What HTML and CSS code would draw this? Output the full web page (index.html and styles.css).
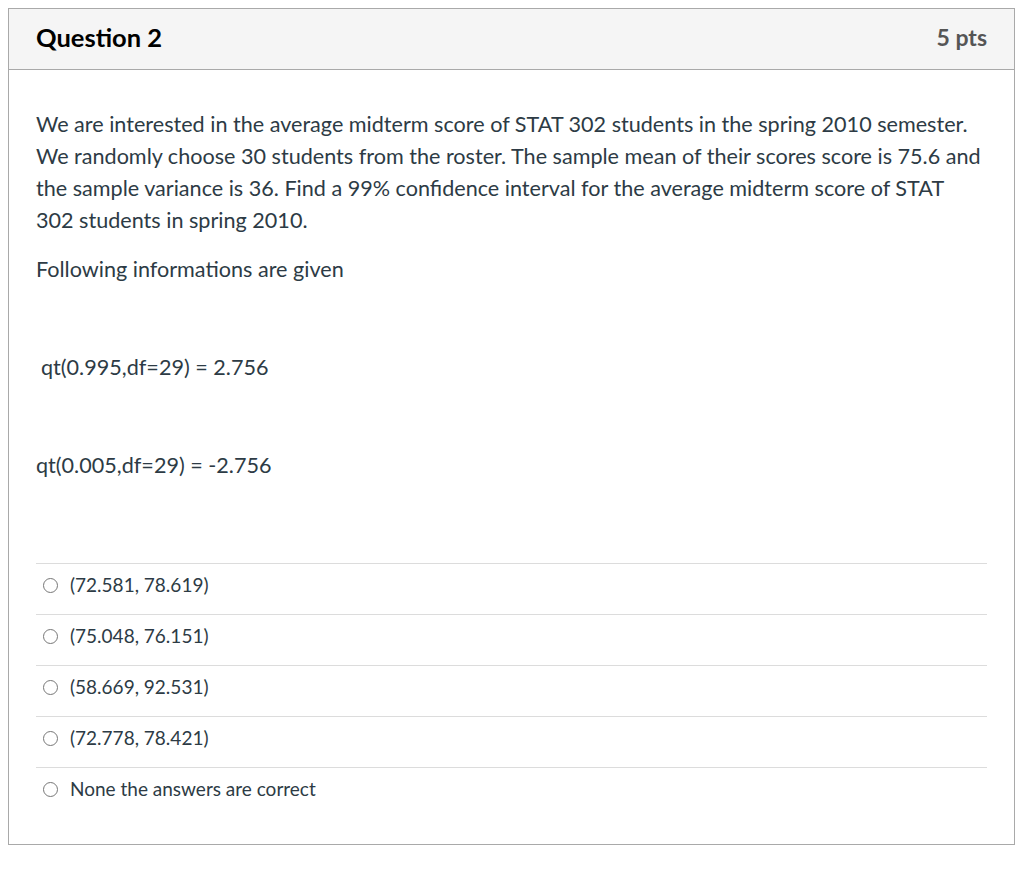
FILE: index.html
```html
<!DOCTYPE html>
<html>
<head>
<meta charset="utf-8">
<link rel="stylesheet" href="styles.css">
</head>
<body>
<div class="card">
  <div class="header">
    <span class="title">Question 2</span>
    <span class="pts">5 pts</span>
  </div>
  <div class="body">
    <p class="question">We are interested in the average midterm score of STAT 302 students in the spring 2010 semester. We randomly choose 30 students from the roster. The sample mean of their scores score is 75.6 and the sample variance is 36. Find a 99% confidence interval for the average midterm score of STAT 302 students in spring 2010.</p>
    <p>Following informations are given</p>
    <p>&nbsp;</p>
    <p class="indent">qt(0.995,df=29) = 2.756</p>
    <p>&nbsp;</p>
    <p>qt(0.005,df=29) = -2.756</p>
    <p class="last">&nbsp;</p>
    <div class="answers">
      <label class="answer"><span class="radio"></span><span>(72.581, 78.619)</span></label>
      <label class="answer"><span class="radio"></span><span>(75.048, 76.151)</span></label>
      <label class="answer"><span class="radio"></span><span>(58.669, 92.531)</span></label>
      <label class="answer"><span class="radio"></span><span>(72.778, 78.421)</span></label>
      <label class="answer"><span class="radio"></span><span>None the answers are correct</span></label>
    </div>
  </div>
</div>
</body>
</html>
```
FILE: styles.css
```css
body {
  margin: 8px;
  font-family: Lato, "Liberation Sans", sans-serif;
  color: #2d3b45;
  background: #fff;
}
.card {
  width: 1007px;
  box-sizing: border-box;
  border: 1px solid #a9a9a9;
}
.header {
  height: 61px;
  box-sizing: border-box;
  display: flex;
  align-items: center;
  justify-content: space-between;
  padding: 0 27px 4px 27px;
  background: #f5f5f5;
  border-bottom: 1px solid #a9a9a9;
}
.title {
  font-size: 25.5px;
  font-weight: 700;
  color: #000;
}
.pts {
  font-size: 23px;
  font-weight: 700;
  color: #555;
}
.body {
  padding: 38px 27px 26px 27px;
}
.body p {
  margin: 0 0 17px 0;
  font-size: 21.6px;
  line-height: 32px;
}
.body p.question {
  max-width: 947px;
}
.body p.indent {
  padding-left: 5px;
}
.body p.last {
  margin-bottom: 0;
}
.answers {
  margin-top: 33px;
}
.answer {
  display: flex;
  align-items: center;
  border-top: 1px solid #dcdcdc;
  padding: 11px 0 19px 7px;
  font-size: 19px;
  line-height: 20px;
  gap: 12px;
}
.radio {
  width: 15px;
  height: 15px;
  box-sizing: border-box;
  border: 1.5px solid #777;
  border-radius: 50%;
  flex: none;
}
```
